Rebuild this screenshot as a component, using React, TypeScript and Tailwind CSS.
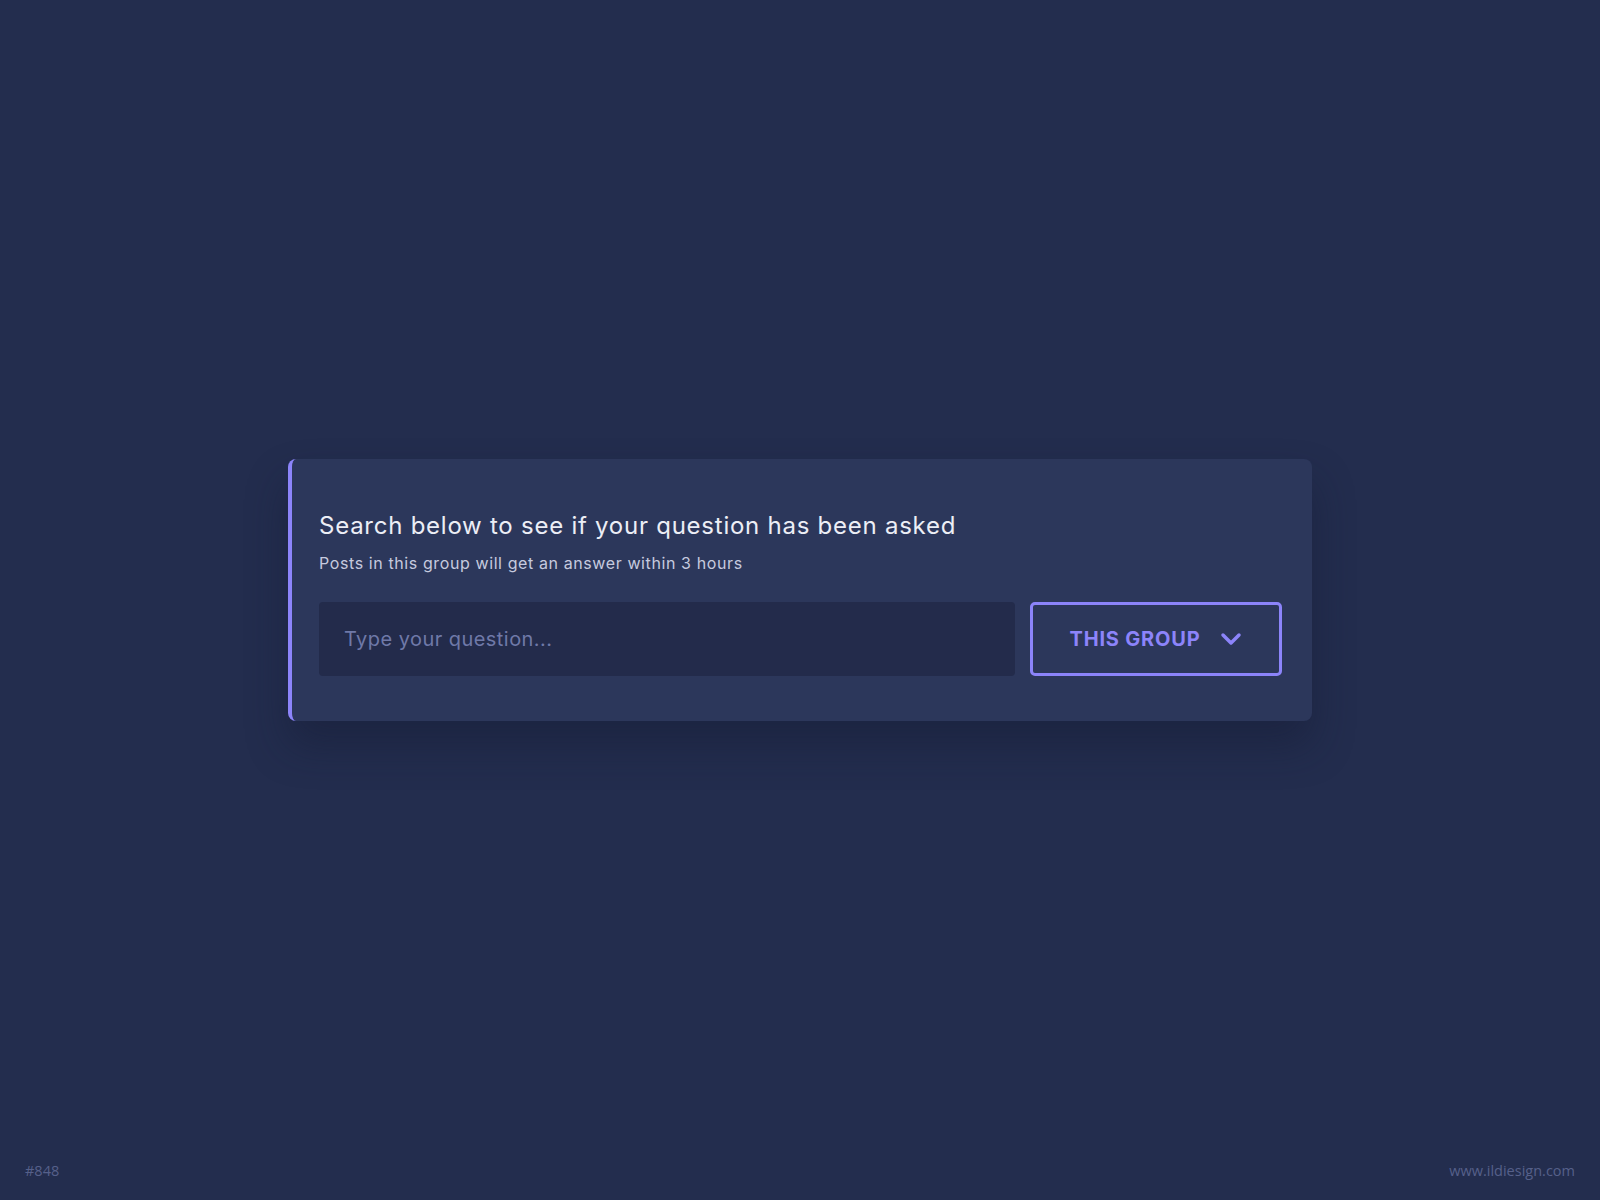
import React from "react";

export default function App() {
  return (
    <div className="h-[1200px] w-full flex flex-col bg-[#232d4e]" style={{ fontFamily: "Inter, 'Open Sans', sans-serif" }}>
      <main className="flex-1 flex items-center justify-center pt-[18px]">
        <div className="w-[1024px] h-[262px] bg-[#2c375b] rounded-lg border-l-4 border-[#8c84fa] pl-[27px] pr-[30px] pt-[52px] shadow-[0_24px_40px_rgba(20,26,50,0.45)] flex flex-col">
          <h1 className="text-[24px] leading-[30px] text-[#eceef6] font-normal tracking-[0.75px]">
            Search below to see if your question has been asked
          </h1>
          <p className="mt-[12px] text-[16px] leading-[20px] text-[#c6cadf] tracking-[0.6px]">
            Posts in this group will get an answer within 3 hours
          </p>
          <div className="mt-[29px] flex gap-[15px] h-[74px]">
            <input
              type="text"
              placeholder="Type your question..."
              className="flex-1 h-full rounded bg-[#232b4b] pl-[25px] text-[20px] tracking-[0.45px] text-[#eceef6] placeholder:text-[#6f79a8] outline-none"
            />
            <button className="w-[252px] h-full rounded-[5px] border-[3px] border-[#8c84fa] flex items-center justify-center gap-[20px] text-[#8c84fa] text-[20px] font-bold tracking-[0.8px]">
              <span>THIS GROUP</span>
              <svg width="22" height="14" viewBox="0 0 22 14" fill="none">
                <path d="M3 3 L11 11 L19 3" stroke="#8c84fa" strokeWidth="3.5" strokeLinecap="round" strokeLinejoin="round" />
              </svg>
            </button>
          </div>
        </div>
      </main>
      <footer className="flex justify-between px-[25px] pb-[19px] text-[14.5px] leading-[20px] text-[#56608a]" style={{ fontFamily: "'Open Sans', sans-serif" }}>
        <span>#848</span>
        <span>www.ildiesign.com</span>
      </footer>
    </div>
  );
}
